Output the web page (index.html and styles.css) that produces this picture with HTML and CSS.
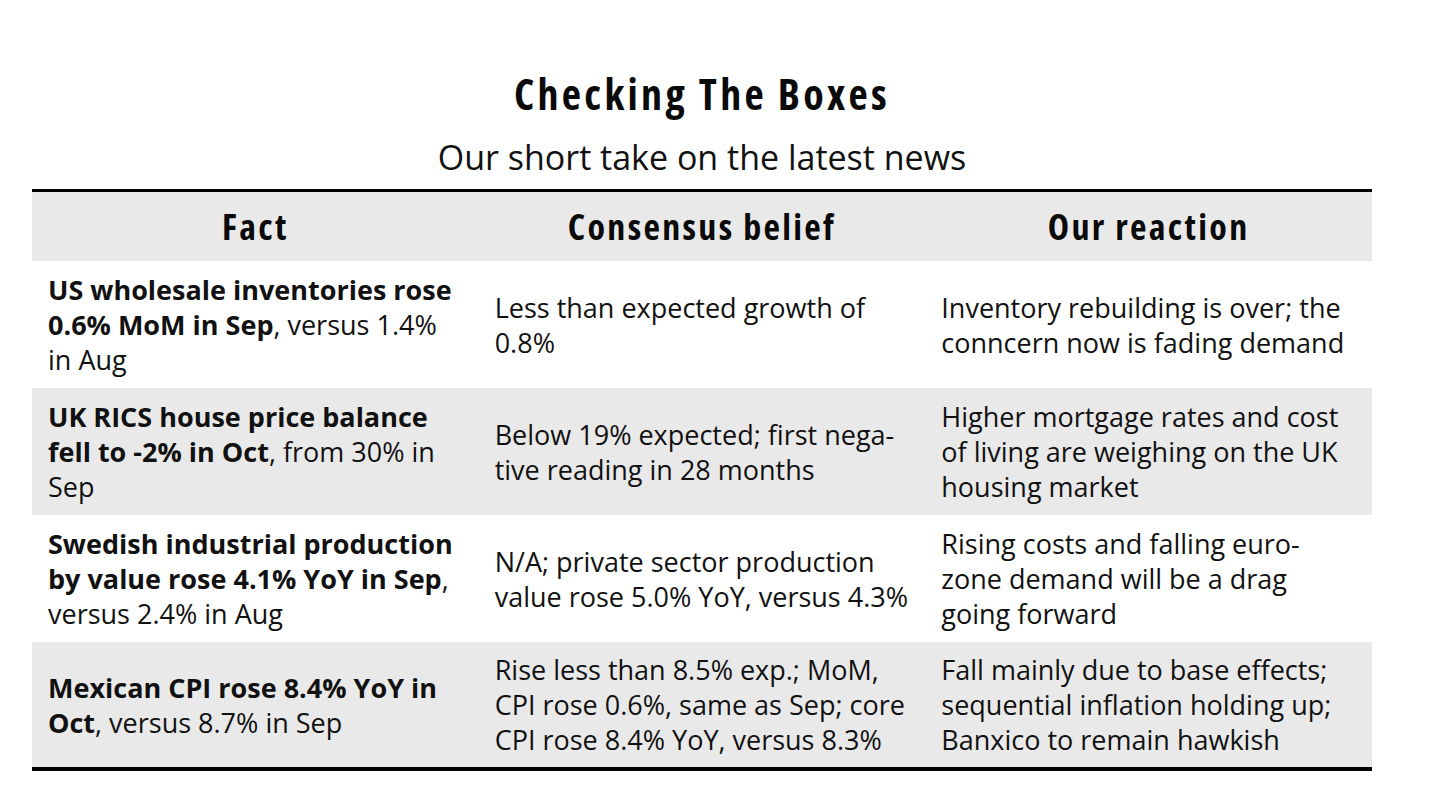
FILE: index.html
```html
<!DOCTYPE html>
<html lang="en">
<head>
<meta charset="utf-8">
<title>Checking The Boxes</title>
<link rel="stylesheet" href="styles.css">
</head>
<body>
<main class="page">
  <h1 class="title">Checking The Boxes</h1>
  <p class="subtitle">Our short take on the latest news</p>
  <table class="boxes">
    <thead>
      <tr>
        <th>Fact</th>
        <th>Consensus belief</th>
        <th>Our reaction</th>
      </tr>
    </thead>
    <tbody>
      <tr>
        <td><b>US wholesale inventories rose<br>0.6% MoM in Sep</b>, versus 1.4%<br>in Aug</td>
        <td>Less than expected growth of<br>0.8%</td>
        <td>Inventory rebuilding is over; the<br>conncern now is fading demand</td>
      </tr>
      <tr class="shade">
        <td><b>UK RICS house price balance<br>fell to -2% in Oct</b>, from 30% in<br>Sep</td>
        <td>Below 19% expected; first nega-<br>tive reading in 28 months</td>
        <td>Higher mortgage rates and cost<br>of living are weighing on the UK<br>housing market</td>
      </tr>
      <tr>
        <td><b>Swedish industrial production<br>by value rose 4.1% YoY in Sep</b>,<br>versus 2.4% in Aug</td>
        <td>N/A; private sector production<br>value rose 5.0% YoY, versus 4.3%</td>
        <td>Rising costs and falling euro-<br>zone demand will be a drag<br>going forward</td>
      </tr>
      <tr class="shade">
        <td><b>Mexican CPI rose 8.4% YoY in<br>Oct</b>, versus 8.7% in Sep</td>
        <td>Rise less than 8.5% exp.; MoM,<br>CPI rose 0.6%, same as Sep; core<br>CPI rose 8.4% YoY, versus 8.3%</td>
        <td>Fall mainly due to base effects;<br>sequential inflation holding up;<br>Banxico to remain hawkish</td>
      </tr>
    </tbody>
  </table>
</main>
</body>
</html>
```

FILE: styles.css
```css
html, body {
  margin: 0;
  padding: 0;
  background: #ffffff;
}

body {
  color: #111111;
  font-family: "Open Sans", Lato, "Liberation Sans", sans-serif;
}

.page {
  width: 1340px;
  margin: 0 0 0 32px;
  padding-top: 70px;
}

.title {
  margin: 0;
  text-align: center;
  font-family: "Open Sans", sans-serif;
  font-stretch: 75%;
  font-weight: 700;
  font-size: 42px;
  line-height: 48px;
  letter-spacing: 3.3px;
  color: #0a0a0a;
}

.subtitle {
  margin: 14px 0 7px;
  text-align: center;
  font-family: "Open Sans", sans-serif;
  font-weight: 400;
  font-size: 34px;
  line-height: 50px;
  color: #111111;
}

.boxes {
  width: 100%;
  border-collapse: collapse;
  table-layout: fixed;
  border-top: 3px solid #000000;
  border-bottom: 4px solid #000000;
}

.boxes th {
  height: 69px;
  padding: 0;
  background: #e9e9e9;
  text-align: center;
  vertical-align: middle;
  font-family: "Open Sans", sans-serif;
  font-stretch: 75%;
  font-weight: 700;
  font-size: 36px;
  letter-spacing: 2.3px;
  color: #0a0a0a;
}

.boxes td {
  height: 127px;
  box-sizing: border-box;
  padding: 10px 8px 10px 16px;
  vertical-align: middle;
  text-align: left;
  font-size: 27px;
  line-height: 35px;
  color: #111111;
}

.boxes td b {
  font-weight: 700;
}

.boxes tr.shade td {
  background: #e9e9e9;
}
```
